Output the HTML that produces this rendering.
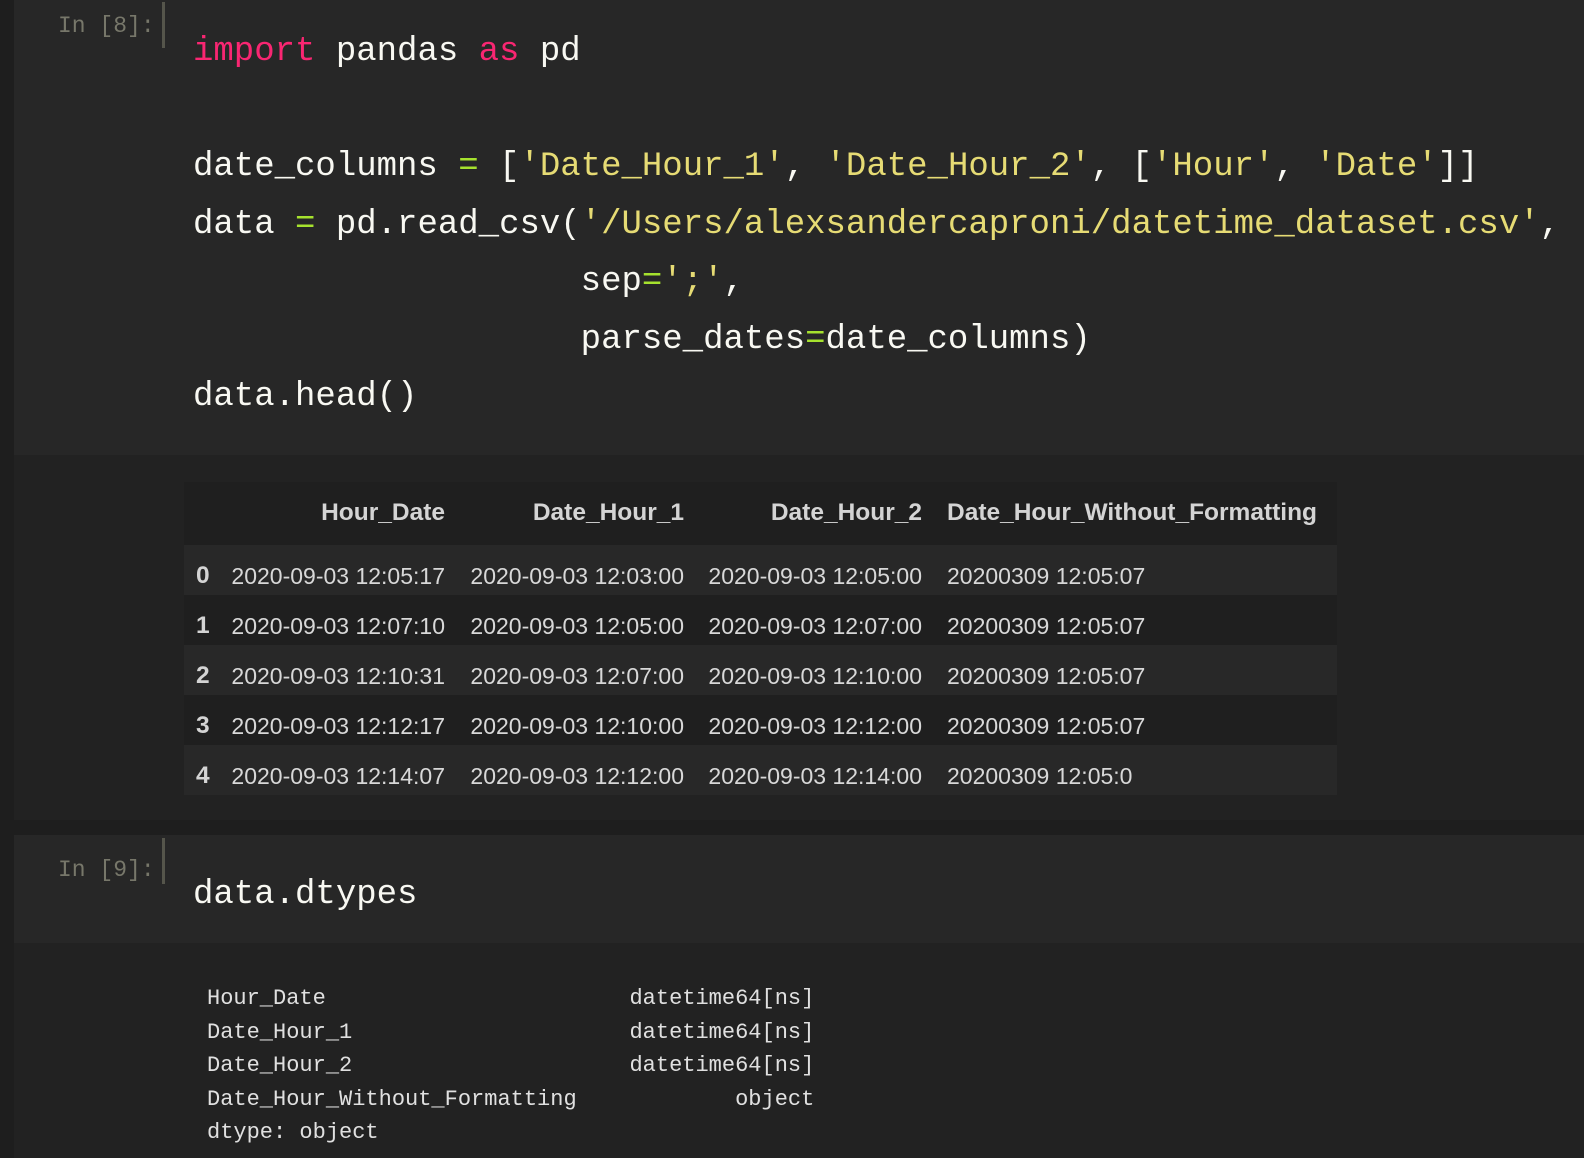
<!DOCTYPE html>
<html><head><meta charset="utf-8"><style>
*{margin:0;padding:0;box-sizing:border-box}
body{width:1584px;height:1158px;background:#1e1e1e;position:relative;overflow:hidden}
.a{position:absolute}
.mono{font-family:"Liberation Mono","DejaVu Sans Mono",monospace;white-space:pre}
.code{font-size:34px;color:#f8f8f2;line-height:57.5px}
.k{color:#f92672}.s{color:#e6db74}.o{color:#a6e22e}
.prompt{font-size:23px;color:#77776a;line-height:30px}
.bar{width:3px;background:#55554b}
.t{font-family:"Liberation Sans Narrow","Liberation Sans",sans-serif;font-size:23px;color:#d8d8d8;white-space:nowrap;line-height:50px}
.h{font-weight:bold;color:#d4d4d4;font-size:24.5px}
.row{position:absolute;left:184px;width:1153px;height:50px}
.r{text-align:right}
.out{font-size:22px;color:#e0e0e0;line-height:33.6px}
</style></head><body>
<div class="a" style="left:14px;top:0;width:1570px;height:455px;background:#272727"></div>
<div class="a" style="left:14px;top:455px;width:1570px;height:365px;background:#222"></div>
<div class="a" style="left:14px;top:835px;width:1570px;height:108px;background:#272727"></div>
<div class="a" style="left:14px;top:943px;width:1570px;height:215px;background:#222"></div>

<div class="a mono prompt" style="left:58px;top:11px">In [8]:</div>
<div class="a bar" style="left:162px;top:2px;height:46px"></div>
<div class="a mono code" style="left:193px;top:24px"><span class="k">import</span> pandas <span class="k">as</span> pd

date_columns <span class="o">=</span> [<span class="s">'Date_Hour_1'</span>, <span class="s">'Date_Hour_2'</span>, [<span class="s">'Hour'</span>, <span class="s">'Date'</span>]]
data <span class="o">=</span> pd.read_csv(<span class="s">'/Users/alexsandercaproni/datetime_dataset.csv'</span>,
                   sep<span class="o">=</span><span class="s">';'</span>,
                   parse_dates<span class="o">=</span>date_columns)
data.head()</div>

<div class="row" style="top:482px;height:63px;background:#1f1f1f"></div>
<div class="row" style="top:545px;background:#282828"></div>
<div class="row" style="top:595px;background:#1f1f1f"></div>
<div class="row" style="top:645px;background:#282828"></div>
<div class="row" style="top:695px;background:#1f1f1f"></div>
<div class="row" style="top:745px;background:#282828"></div>

<div class="a t h r" style="right:1139px;top:488px">Hour_Date</div>
<div class="a t h r" style="right:900px;top:488px">Date_Hour_1</div>
<div class="a t h r" style="right:662px;top:488px">Date_Hour_2</div>
<div class="a t h" style="left:947px;top:488px">Date_Hour_Without_Formatting</div>

<div class="a" style="left:0;top:551px">
<div class="a t h" style="left:196px;top:0">0</div><div class="a t r" style="right:-445px;top:0">2020-09-03 12:05:17</div><div class="a t r" style="right:-684px;top:0">2020-09-03 12:03:00</div><div class="a t r" style="right:-922px;top:0">2020-09-03 12:05:00</div><div class="a t" style="left:947px;top:0">20200309 12:05:07</div>
<div class="a t h" style="left:196px;top:50px">1</div><div class="a t r" style="right:-445px;top:50px">2020-09-03 12:07:10</div><div class="a t r" style="right:-684px;top:50px">2020-09-03 12:05:00</div><div class="a t r" style="right:-922px;top:50px">2020-09-03 12:07:00</div><div class="a t" style="left:947px;top:50px">20200309 12:05:07</div>
<div class="a t h" style="left:196px;top:100px">2</div><div class="a t r" style="right:-445px;top:100px">2020-09-03 12:10:31</div><div class="a t r" style="right:-684px;top:100px">2020-09-03 12:07:00</div><div class="a t r" style="right:-922px;top:100px">2020-09-03 12:10:00</div><div class="a t" style="left:947px;top:100px">20200309 12:05:07</div>
<div class="a t h" style="left:196px;top:150px">3</div><div class="a t r" style="right:-445px;top:150px">2020-09-03 12:12:17</div><div class="a t r" style="right:-684px;top:150px">2020-09-03 12:10:00</div><div class="a t r" style="right:-922px;top:150px">2020-09-03 12:12:00</div><div class="a t" style="left:947px;top:150px">20200309 12:05:07</div>
<div class="a t h" style="left:196px;top:200px">4</div><div class="a t r" style="right:-445px;top:200px">2020-09-03 12:14:07</div><div class="a t r" style="right:-684px;top:200px">2020-09-03 12:12:00</div><div class="a t r" style="right:-922px;top:200px">2020-09-03 12:14:00</div><div class="a t" style="left:947px;top:200px">20200309 12:05:0</div>
</div>

<div class="a mono prompt" style="left:58px;top:855px">In [9]:</div>
<div class="a bar" style="left:162px;top:838px;height:46px"></div>
<div class="a mono code" style="left:193px;top:867px">data.dtypes</div>

<div class="a mono out" style="left:207px;top:982px">Hour_Date                       datetime64[ns]
Date_Hour_1                     datetime64[ns]
Date_Hour_2                     datetime64[ns]
Date_Hour_Without_Formatting            object
dtype: object</div>
</body></html>
